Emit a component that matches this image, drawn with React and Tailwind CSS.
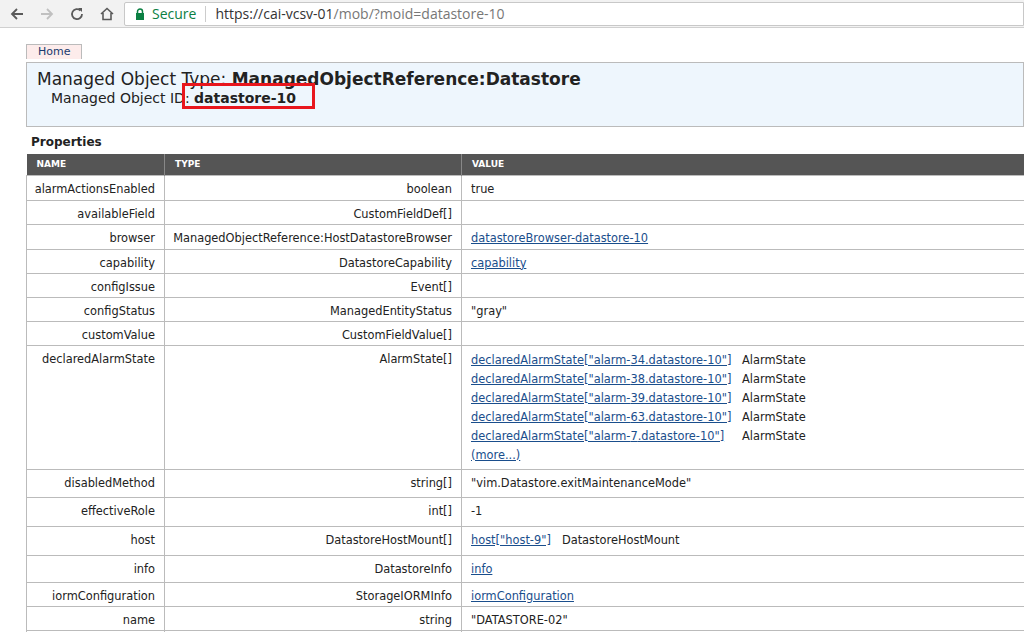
const link = "text-[#1a4e8c] underline";
const rows = [
  ["alarmActionsEnabled","boolean",<span>true</span>,"h-[25px]"],
  ["availableField","CustomFieldDef[]",null,"h-[24px]"],
  ["browser","ManagedObjectReference:HostDatastoreBrowser",<span className={link}>datastoreBrowser-datastore-10</span>,"h-[25px]"],
  ["capability","DatastoreCapability",<span className={link}>capability</span>,"h-[24px]"],
  ["configIssue","Event[]",null,"h-[24px]"],
  ["configStatus","ManagedEntityStatus",<span>"gray"</span>,"h-[24px]"],
  ["customValue","CustomFieldValue[]",null,"h-[24px]"],
  ["declaredAlarmState","AlarmState[]",
    <div className="leading-[19px]">
      {["34","38","39","63","7"].map(n=>(
        <div key={n} className="flex"><span className={link+" w-[271px]"}>declaredAlarmState["alarm-{n}.datastore-10"]</span><span>AlarmState</span></div>
      ))}
      <div><span className={link}>(more...)</span></div>
    </div>,"h-[124px]"],
  ["disabledMethod","string[]",<span>"vim.Datastore.exitMaintenanceMode"</span>,"h-[28px]"],
  ["effectiveRole","int[]",<span>-1</span>,"h-[29px]"],
  ["host","DatastoreHostMount[]",<span><span className={link}>host["host-9"]</span><span className="ml-[11px]">DatastoreHostMount</span></span>,"h-[29px]"],
  ["info","DatastoreInfo",<span className={link}>info</span>,"h-[27px]"],
  ["iormConfiguration","StorageIORMInfo",<span className={link}>iormConfiguration</span>,"h-[24px]"],
  ["name","string",<span>"DATASTORE-02"</span>,"h-[24px]"],
  ["overallStatus","ManagedEntityStatus",<span>"gray"</span>,"h-[24px]"],
];
export default function App(){
  return (
  <div className="w-[1024px] h-[632px] overflow-hidden bg-white" style={{fontFamily:'"DejaVu Sans", Verdana, sans-serif'}}>
    <div className="h-[28px] bg-[#f2f2f2] flex items-center border-b border-[#d0d0d0]">
      <div className="flex items-center gap-[14px] pl-[9px] text-[#5a5a5a]">
        <svg width="16" height="16" viewBox="0 0 16 16"><path d="M14 8H3M8 3L3 8l5 5" stroke="#5a5a5a" strokeWidth="1.8" fill="none"/></svg>
        <svg width="16" height="16" viewBox="0 0 16 16"><path d="M2 8h11M8 3l5 5-5 5" stroke="#c0c0c0" strokeWidth="1.8" fill="none"/></svg>
        <svg width="16" height="16" viewBox="0 0 16 16"><path d="M13 8a5 5 0 1 1-1.5-3.5" stroke="#5a5a5a" strokeWidth="1.8" fill="none"/><path d="M9 2h4v4z" fill="#5a5a5a"/></svg>
        <svg width="16" height="16" viewBox="0 0 16 16"><path d="M2 8L8 2.5 14 8M4 7v6.5h8V7" stroke="#5a5a5a" strokeWidth="1.6" fill="none"/></svg>
      </div>
      <div className="ml-[9px] flex-1 h-[24px] bg-white border border-[#c8c8c8] rounded-l-[2px] flex items-center text-[14px]" style={{fontFamily:'"Open Sans", sans-serif'}}>
        <svg className="ml-[10px]" width="10" height="12" viewBox="0 0 10 12"><path d="M2.5 5V3.5a2.5 2.5 0 0 1 5 0V5" stroke="#0b8043" strokeWidth="1.5" fill="none"/><rect x="1" y="5" width="8" height="7" fill="#0b8043"/></svg>
        <span className="ml-[7px] text-[#0b8043]">Secure</span>
        <span className="mx-[9px] h-[16px] w-px bg-[#ccc]"></span>
        <span className="text-[#333]">https://cai-vcsv-01</span><span className="text-[#777]">/mob/?moid=datastore-10</span>
      </div>
    </div>
    <div className="pl-[26px] pt-[10px] text-[#222]">
      <div className="inline-block bg-[#fdeceb] border border-[#bbb] border-b-0 px-[11px] h-[15px] leading-[14px] text-[11px] text-[#1a3a6e]">Home</div>
      <div className="h-[65px] bg-[#eef6fd] border border-[#bbb] pl-[10px] pt-[6px]">
        <div className="text-[17px] leading-[20px]">Managed Object Type: <b>ManagedObjectReference:Datastore</b></div>
        <div className="text-[14px] leading-[18px] pl-[14px] flex items-center">Managed Object ID
          <span className="relative">: <b>datastore-10</b><span className="absolute left-[-3px] top-[-6px] w-[133px] h-[26px] border-[3px] border-[#e8161d]"></span></span>
        </div>
      </div>
      <div className="mt-[8px] pl-[5px] text-[12px] font-bold leading-[15px]">Properties</div>
      <table className="mt-[4px] w-[1010px] border-collapse text-[11.4px] text-[#222]">
        <thead>
          <tr className="bg-[#555] text-white text-[9px] font-bold h-[21px]">
            <th className="text-left pl-[10px] w-[138px] border-r border-[#888]">NAME</th>
            <th className="text-left pl-[10px] w-[297px] border-r border-[#888]">TYPE</th>
            <th className="text-left pl-[10px]">VALUE</th>
          </tr>
        </thead>
        <tbody>
          {rows.map(([n,t,v,h])=>(
            <tr key={n} className={h}>
              <td className="border border-[#bbb] text-right pr-[9px] align-top pt-[5px]">{n}</td>
              <td className="border border-[#bbb] text-right pr-[9px] align-top pt-[5px]">{t}</td>
              <td className="border border-[#bbb] pl-[9px] align-top pt-[5px]">{v}</td>
            </tr>
          ))}
        </tbody>
      </table>
    </div>
  </div>);
}
